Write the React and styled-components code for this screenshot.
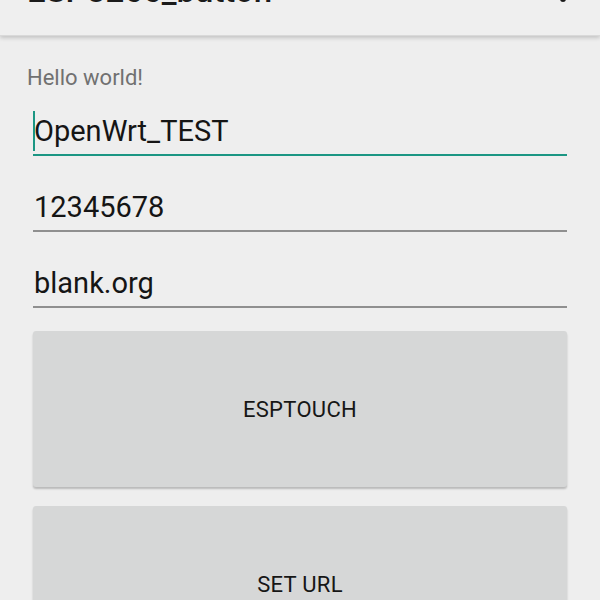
import styled, { createGlobalStyle } from "styled-components";

const GlobalStyle = createGlobalStyle`
  html, body {
    margin: 0;
    padding: 0;
    background: #eeeeee;
    font-family: Roboto, "Liberation Sans", sans-serif;
  }
`;

const fields = [
  { id: "ssid", value: "OpenWrt_TEST", active: true },
  { id: "pass", value: "12345678" },
  { id: "url", value: "blank.org" },
];

const App = () => {
  return (
    <Screen>
      <GlobalStyle />
      {/* action bar, scrolled so only its lower part shows */}
      <Toolbar>
        <Title>ESP8266_button</Title>
        <Overflow width="8" height="40" viewBox="0 0 8 40">
          <circle cx="4" cy="9" r="3" />
          <circle cx="4" cy="21" r="3" />
          <circle cx="4" cy="33" r="3" />
        </Overflow>
      </Toolbar>

      <Content>
        <Hello>Hello world!</Hello>

        <Fields>
          {fields.map(({ id, value, active }) => (
            <Field key={id} $active={active}>
              {active && <Caret />}
              <FieldText>{value}</FieldText>
            </Field>
          ))}
        </Fields>

        <Buttons>
          <Button>ESPTOUCH</Button>
          <Button>SET URL</Button>
        </Buttons>
      </Content>
    </Screen>
  );
};

const Screen = styled.div`
  width: 600px;
  height: 600px;
  overflow: hidden;
  background: #eeeeee;
`;

const Toolbar = styled.header`
  position: relative;
  z-index: 1;
  height: 35px;
  display: flex;
  align-items: flex-end;
  justify-content: space-between;
  padding: 0 33px 0 27px;
  background: #efefef;
  box-shadow: 0 1px 0 #d9d9d9, 0 3px 4px rgba(0, 0, 0, 0.18);
`;

const Title = styled.h1`
  margin: 0 0 28px 0;
  font-size: 33px;
  line-height: 33px;
  font-weight: 500;
  color: #1b1b1b;
  white-space: nowrap;
`;

const Overflow = styled.svg`
  display: block;
  margin-bottom: 29px;
  fill: #1b1b1b;
`;

const Content = styled.main`
  padding: 31px 33px 0 27px;
`;

const Hello = styled.div`
  font-size: 22px;
  line-height: 24px;
  color: #717171;
`;

const Fields = styled.div`
  display: flex;
  flex-direction: column;
  gap: 34px;
  margin: 24px 0 0 6px;
`;

const Field = styled.div`
  display: flex;
  align-items: center;
  height: 34px;
  padding-bottom: 6px;
  border-bottom: 2px solid ${({ $active }) => ($active ? "#1b9683" : "#8f8f8f")};
`;

const Caret = styled.span`
  display: block;
  width: 2px;
  height: 40px;
  margin: 0 -2px 0 0;
  background: #1b9683;
`;

const FieldText = styled.span`
  padding-left: 1px;
  font-size: 29px;
  line-height: 34px;
  color: #151515;
`;

const Buttons = styled.div`
  display: flex;
  flex-direction: column;
  gap: 19px;
  margin: 23px 0 0 6px;
`;

const Button = styled.button`
  height: 156px;
  border: none;
  border-radius: 3px;
  background: #d6d7d7;
  box-shadow: 0 2px 2px rgba(0, 0, 0, 0.22);
  font-family: Roboto, "Liberation Sans", sans-serif;
  font-size: 22px;
  font-weight: 400;
  letter-spacing: 0.3px;
  color: #161616;
  cursor: pointer;
`;

export default App;
